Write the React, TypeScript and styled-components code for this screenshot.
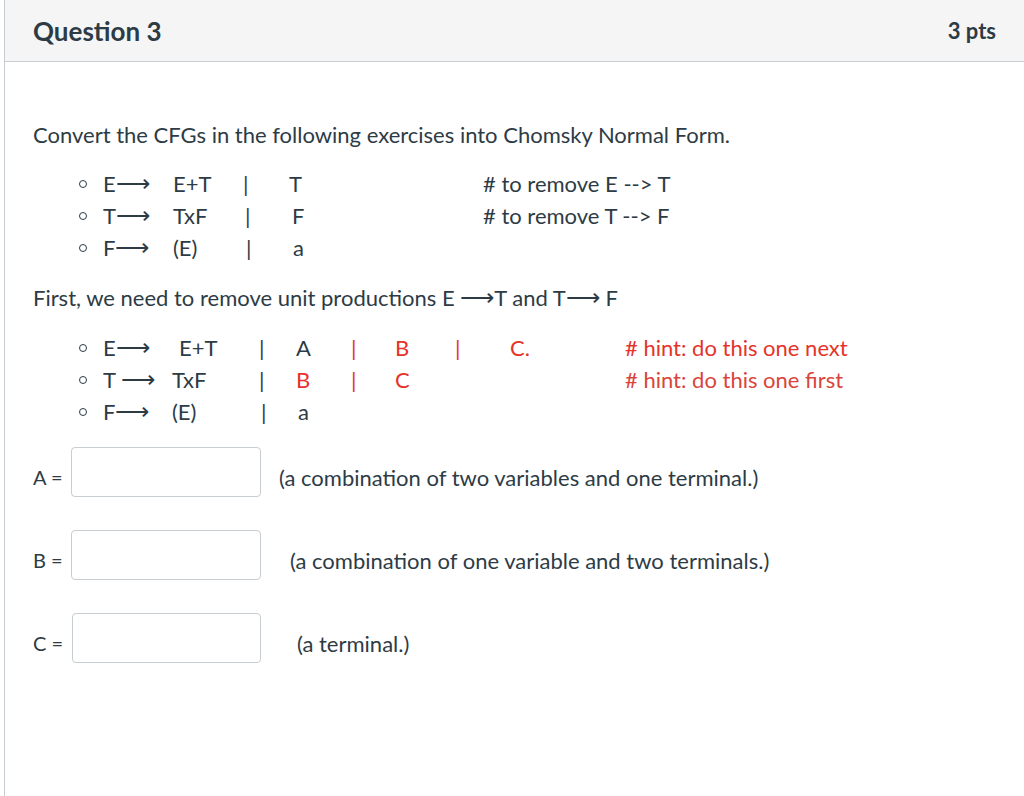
import React from 'react'
import styled, { createGlobalStyle } from 'styled-components'

const GlobalStyle = createGlobalStyle`
  html, body {
    margin: 0;
    padding: 0;
    background: #ffffff;
    overflow: hidden;
  }
  body {
    font-family: Lato, "Open Sans", "DejaVu Sans", sans-serif;
    color: #2d3b45;
  }
`

const Question = styled.section`
  margin-left: 4px;
  min-height: 796px;
  border-left: 1px solid #c7cdd1;
`

const Header = styled.header`
  display: flex;
  align-items: center;
  justify-content: space-between;
  height: 61px;
  padding: 0 28px;
  background: #f5f5f5;
  border-bottom: 1px solid #c7cdd1;
`

const Title = styled.h2`
  margin: 0;
  font-size: 26px;
  font-weight: 700;
  color: #2d3b45;
`

const Points = styled.div`
  font-size: 22px;
  font-weight: 700;
  color: #2d3b45;
`

const Body = styled.div`
  padding: 0 28px;
`

const Para = styled.p<{ $top: number }>`
  margin: ${p => p.$top}px 0 0;
  font-size: 22px;
  line-height: 30px;
`

const Grammar = styled.div<{ $top: number }>`
  margin-top: ${p => p.$top}px;
  padding-left: 42px;
`

const Rule = styled.div<{ $cols: string }>`
  display: grid;
  grid-template-columns: ${p => p.$cols};
  align-items: center;
  height: 32px;
  font-size: 22px;
  line-height: 32px;
  white-space: nowrap;
`

const Bullet = styled.span`
  display: inline-block;
  width: 6px;
  height: 6px;
  border: 1.5px solid #2d3b45;
  border-radius: 50%;
  margin-left: 4px;
`

const Cell = styled.span<{ $red?: boolean; $shift?: number; $hint?: 'next' | 'first' }>`
  padding-left: ${p => p.$shift || 0}px;
  color: ${p => (p.$hint === 'first' ? '#d9453b' : p.$red || p.$hint ? '#e5332a' : '#2d3b45')};
`

const Arrow = styled.span`
  font-family: "DejaVu Sans", sans-serif;
  font-size: 24px;
  line-height: 1;
  font-weight: 300;
`

const Answers = styled.div`
  display: flex;
  flex-direction: column;
  gap: 33px;
  margin-top: 19px;
`

const AnswerRow = styled.div`
  display: flex;
  align-items: center;
`

const Label = styled.span`
  width: 38px;
  margin-top: 10px;
  font-size: 20px;
`

const Blank = styled.input<{ $nudge?: number }>`
  box-sizing: border-box;
  width: ${p => 190 - (p.$nudge || 0)}px;
  height: 50px;
  margin-left: ${p => p.$nudge || 0}px;
  border: 1px solid #c7cdd1;
  border-radius: 4px;
  background: #fff;
  outline: none;
`

const Note = styled.span<{ $gap: number }>`
  margin-left: ${p => p.$gap}px;
  margin-top: 10px;
  font-size: 22px;
`

const cols1 = '28px 70px 70px 46px 194px auto'
const cols2 = '28px 69px 87px 37px 55px 44px 60px 55px 115px auto'

const lhs = (v: string, spaced?: boolean) => (
  <Cell>
    {v}
    {spaced ? ' ' : ''}
    <Arrow>⟶</Arrow>
  </Cell>
)

export default function App() {
  return (
    <>
      <GlobalStyle />
      <Question>
        <Header>
          <Title>Question 3</Title>
          <Points>3 pts</Points>
        </Header>
        <Body>
          <Para $top={58}>Convert the CFGs in the following exercises into Chomsky Normal Form.</Para>
          <Grammar $top={18}>
            <Rule $cols={cols1}>
              <Bullet />
              {lhs('E')}
              <Cell>E+T</Cell>
              <Cell>|</Cell>
              <Cell>T</Cell>
              <Cell># to remove E --&gt; T</Cell>
            </Rule>
            <Rule $cols={cols1}>
              <Bullet />
              {lhs('T')}
              <Cell>TxF</Cell>
              <Cell $shift={2}>|</Cell>
              <Cell $shift={3}>F</Cell>
              <Cell># to remove T --&gt; F</Cell>
            </Rule>
            <Rule $cols={cols1}>
              <Bullet />
              {lhs('F')}
              <Cell>(E)</Cell>
              <Cell $shift={3}>|</Cell>
              <Cell $shift={4}>a</Cell>
              <Cell />
            </Rule>
          </Grammar>
          <Para $top={19}>
            First, we need to remove unit productions E <Arrow>⟶</Arrow>T and T<Arrow>⟶</Arrow> F
          </Para>
          <Grammar $top={19}>
            <Rule $cols={cols2}>
              <Bullet />
              {lhs('E')}
              <Cell $shift={7}>E+T</Cell>
              <Cell>|</Cell>
              <Cell>A</Cell>
              <Cell $red>|</Cell>
              <Cell $red>B</Cell>
              <Cell $red>|</Cell>
              <Cell $red>C.</Cell>
              <Cell $hint="next"># hint: do this one next</Cell>
            </Rule>
            <Rule $cols={cols2}>
              <Bullet />
              {lhs('T', true)}
              <Cell>TxF</Cell>
              <Cell>|</Cell>
              <Cell $red>B</Cell>
              <Cell $red>|</Cell>
              <Cell $red>C</Cell>
              <Cell />
              <Cell />
              <Cell $hint="first"># hint: do this one first</Cell>
            </Rule>
            <Rule $cols={cols2}>
              <Bullet />
              {lhs('F')}
              <Cell>(E)</Cell>
              <Cell $shift={2}>|</Cell>
              <Cell $shift={2}>a</Cell>
            </Rule>
          </Grammar>
          <Answers>
            <AnswerRow>
              <Label>A =</Label>
              <Blank />
              <Note $gap={18}>(a combination of two variables and one terminal.)</Note>
            </AnswerRow>
            <AnswerRow>
              <Label>B =</Label>
              <Blank />
              <Note $gap={29}>(a combination of one variable and two terminals.)</Note>
            </AnswerRow>
            <AnswerRow>
              <Label>C =</Label>
              <Blank $nudge={1} />
              <Note $gap={36}>(a terminal.)</Note>
            </AnswerRow>
          </Answers>
        </Body>
      </Question>
    </>
  )
}
